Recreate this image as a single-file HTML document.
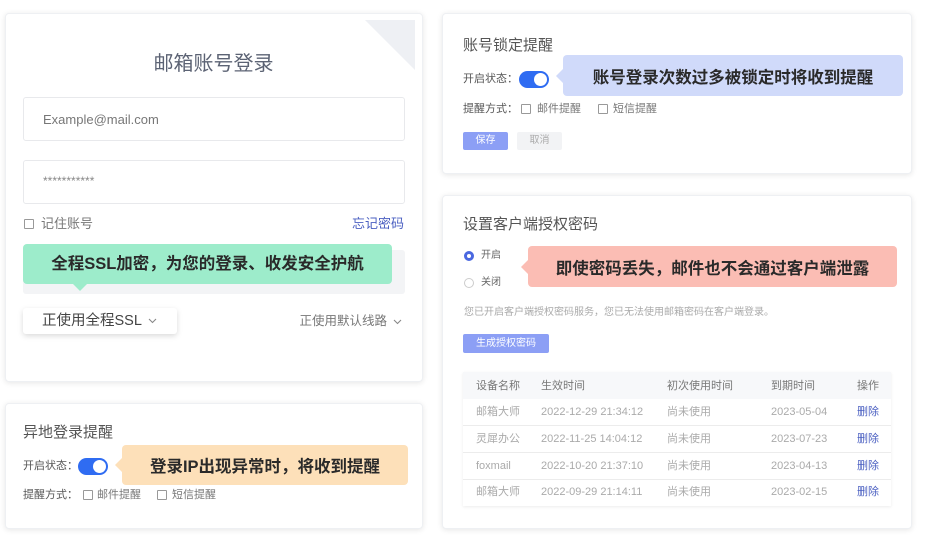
<!DOCTYPE html>
<html><head><meta charset="utf-8"><style>
*{margin:0;padding:0;box-sizing:border-box}
body{width:927px;height:540px;background:#fff;position:relative;overflow:hidden;font-family:"Liberation Sans","Noto Sans CJK SC",sans-serif;color:#555}
.a{position:absolute;white-space:nowrap}
.card{position:absolute;background:#fff;border-radius:4px;box-shadow:0 1px 6px rgba(0,0,0,.1);border:1px solid #eef0f3}
.t{font-size:15px;color:#555}
.s{font-size:11px;color:#555;line-height:14px}
.cb{position:absolute;width:10px;height:10px;border:1px solid #999;border-radius:1px}
.tog{position:absolute;width:30px;height:17px;border-radius:9px;background:#2f6cf2}
.tog:after{content:"";position:absolute;right:2px;top:2px;width:13px;height:13px;border-radius:50%;background:#fff}
.tip{position:absolute;border-radius:4px;font-size:16.5px;font-weight:bold;color:#2a2a2a;display:flex;align-items:center;justify-content:center}
.tip:before{content:"";position:absolute;left:-7px;top:50%;margin-top:-7px;border:7px solid transparent;border-left:0;border-right-color:inherit}
.td{position:absolute;font-size:11px;color:#aaa;line-height:14px;height:14px}
.chev{display:inline-block;vertical-align:middle;margin-left:6px}
</style></head><body>

<!-- card 1 -->
<div class="card" style="left:5px;top:13px;width:418px;height:369px"></div>
<div class="a" style="left:365px;top:20px;width:0;height:0;border-top:50px solid #eef0f4;border-left:50px solid transparent"></div>
<div class="a" style="left:0;width:427px;text-align:center;top:47px;font-size:20px;color:#5c6374">邮箱账号登录</div>
<div class="a" style="left:23px;top:97px;width:382px;height:44px;border:1px solid #e8e9ec;border-radius:3px"></div>
<div class="a" style="left:43px;top:112px;font-size:13px;color:#777">Example@mail.com</div>
<div class="a" style="left:23px;top:160px;width:382px;height:44px;border:1px solid #e8e9ec;border-radius:3px"></div>
<div class="a" style="left:43px;top:174px;font-size:12px;color:#888">***********</div>
<div class="cb" style="left:24px;top:219px"></div>
<div class="a" style="left:41px;top:215px;font-size:13px;color:#777;line-height:18px">记住账号</div>
<div class="a" style="right:523px;top:215px;font-size:13px;color:#4a5fc1;line-height:18px">忘记密码</div>
<div class="a" style="left:23px;top:250px;width:382px;height:44px;background:#f3f4f6;border-radius:3px"></div>
<div class="a" style="left:23px;top:244px;width:369px;height:40px;background:#9deccb;border-radius:4px;font-size:16.5px;font-weight:bold;color:#2a2a2a;text-align:center;line-height:40px">全程SSL加密，为您的登录、收发安全护航</div>
<div class="a" style="left:73px;top:284px;border:7px solid transparent;border-top-color:#9deccb;border-bottom:0"></div>
<div class="a" style="left:23px;top:308px;width:154px;height:26px;background:#fff;box-shadow:0 2px 6px rgba(0,0,0,.15);border-radius:3px;font-size:14.5px;color:#444;line-height:26px;padding-left:19px">正使用全程SSL<svg class="chev" width="9" height="6" viewBox="0 0 9 6"><path d="M1 1l3.5 3.5L8 1" fill="none" stroke="#888" stroke-width="1.1"/></svg></div>
<div class="a" style="right:525px;top:313px;font-size:12.5px;color:#777;line-height:16px">正使用默认线路<svg class="chev" width="9" height="6" viewBox="0 0 9 6"><path d="M1 1l3.5 3.5L8 1" fill="none" stroke="#888" stroke-width="1.1"/></svg></div>

<!-- card 2 -->
<div class="card" style="left:5px;top:403px;width:418px;height:126px"></div>
<div class="a t" style="left:23px;top:421px">异地登录提醒</div>
<div class="a s" style="left:23px;top:459px">开启状态：</div>
<div class="tog" style="left:78px;top:458px"></div>
<div class="tip" style="left:122px;top:445px;width:286px;height:40px;background:#fde0b9;border-color:#fde0b9">登录IP出现异常时，将收到提醒</div>
<div class="a s" style="left:23px;top:488px">提醒方式：</div>
<div class="cb" style="left:83px;top:490px"></div>
<div class="a s" style="left:97px;top:488px;color:#777">邮件提醒</div>
<div class="cb" style="left:157px;top:490px"></div>
<div class="a s" style="left:172px;top:488px;color:#777">短信提醒</div>

<!-- card 3 -->
<div class="card" style="left:442px;top:13px;width:470px;height:161px"></div>
<div class="a t" style="left:463px;top:34px">账号锁定提醒</div>
<div class="a s" style="left:463px;top:72px">开启状态：</div>
<div class="tog" style="left:519px;top:71px"></div>
<div class="tip" style="left:563px;top:55px;width:340px;height:41px;background:#d0dafa;border-color:#d0dafa">账号登录次数过多被锁定时将收到提醒</div>
<div class="a s" style="left:463px;top:102px">提醒方式：</div>
<div class="cb" style="left:521px;top:104px"></div>
<div class="a s" style="left:537px;top:102px;color:#777">邮件提醒</div>
<div class="cb" style="left:598px;top:104px"></div>
<div class="a s" style="left:613px;top:102px;color:#777">短信提醒</div>
<div class="a" style="left:463px;top:132px;width:45px;height:18px;background:#8c9ff5;border-radius:2px;color:#fff;font-size:10px;text-align:center;line-height:18px">保存</div>
<div class="a" style="left:517px;top:132px;width:45px;height:18px;background:#f2f3f5;border-radius:2px;color:#aaa;font-size:10px;text-align:center;line-height:18px">取消</div>

<!-- card 4 -->
<div class="card" style="left:442px;top:195px;width:470px;height:334px"></div>
<div class="a t" style="left:463px;top:213px">设置客户端授权密码</div>
<div class="a" style="left:464px;top:251px;width:10px;height:10px;border-radius:50%;border:3px solid #4a68e0"></div>
<div class="a s" style="left:481px;top:249px;color:#666;font-size:10px">开启</div>
<div class="a" style="left:464px;top:278px;width:10px;height:10px;border-radius:50%;border:1px solid #ccc"></div>
<div class="a s" style="left:481px;top:276px;color:#666;font-size:10px">关闭</div>
<div class="tip" style="left:528px;top:246px;width:369px;height:41px;background:#fbbdb4;border-color:#fbbdb4">即使密码丢失，邮件也不会通过客户端泄露</div>
<div class="a" style="left:464px;top:303px;font-size:10px;color:#aaa">您已开启客户端授权密码服务，您已无法使用邮箱密码在客户端登录。</div>
<div class="a" style="left:463px;top:334px;width:86px;height:19px;background:#8c9ff5;border-radius:2px;color:#fff;font-size:10px;text-align:center;line-height:19px">生成授权密码</div>
<div class="a" style="left:463px;top:372px;width:428px;height:134px;box-shadow:0 1px 3px rgba(0,0,0,.08)"></div>
<div class="a" style="left:463px;top:372px;width:428px;height:27px;background:#f7f8fa"></div>
<div class="a" style="left:463px;top:425px;width:428px;height:1px;background:#ececec"></div>
<div class="a" style="left:463px;top:452px;width:428px;height:1px;background:#ececec"></div>
<div class="a" style="left:463px;top:479px;width:428px;height:1px;background:#ececec"></div>
<div class="td" style="left:476px;top:379px;color:#777">设备名称</div>
<div class="td" style="left:541px;top:379px;color:#777">生效时间</div>
<div class="td" style="left:667px;top:379px;color:#777">初次使用时间</div>
<div class="td" style="left:771px;top:379px;color:#777">到期时间</div>
<div class="td" style="left:857px;top:379px;color:#777">操作</div>

<div class="td" style="left:476px;top:405px">邮箱大师</div>
<div class="td" style="left:541px;top:405px">2022-12-29 21:34:12</div>
<div class="td" style="left:667px;top:405px">尚未使用</div>
<div class="td" style="left:771px;top:405px">2023-05-04</div>
<div class="td" style="left:857px;top:405px;color:#4a5fc1">删除</div>

<div class="td" style="left:476px;top:432px">灵犀办公</div>
<div class="td" style="left:541px;top:432px">2022-11-25 14:04:12</div>
<div class="td" style="left:667px;top:432px">尚未使用</div>
<div class="td" style="left:771px;top:432px">2023-07-23</div>
<div class="td" style="left:857px;top:432px;color:#4a5fc1">删除</div>

<div class="td" style="left:476px;top:459px">foxmail</div>
<div class="td" style="left:541px;top:459px">2022-10-20 21:37:10</div>
<div class="td" style="left:667px;top:459px">尚未使用</div>
<div class="td" style="left:771px;top:459px">2023-04-13</div>
<div class="td" style="left:857px;top:459px;color:#4a5fc1">删除</div>

<div class="td" style="left:476px;top:485px">邮箱大师</div>
<div class="td" style="left:541px;top:485px">2022-09-29 21:14:11</div>
<div class="td" style="left:667px;top:485px">尚未使用</div>
<div class="td" style="left:771px;top:485px">2023-02-15</div>
<div class="td" style="left:857px;top:485px;color:#4a5fc1">删除</div>
</body></html>
